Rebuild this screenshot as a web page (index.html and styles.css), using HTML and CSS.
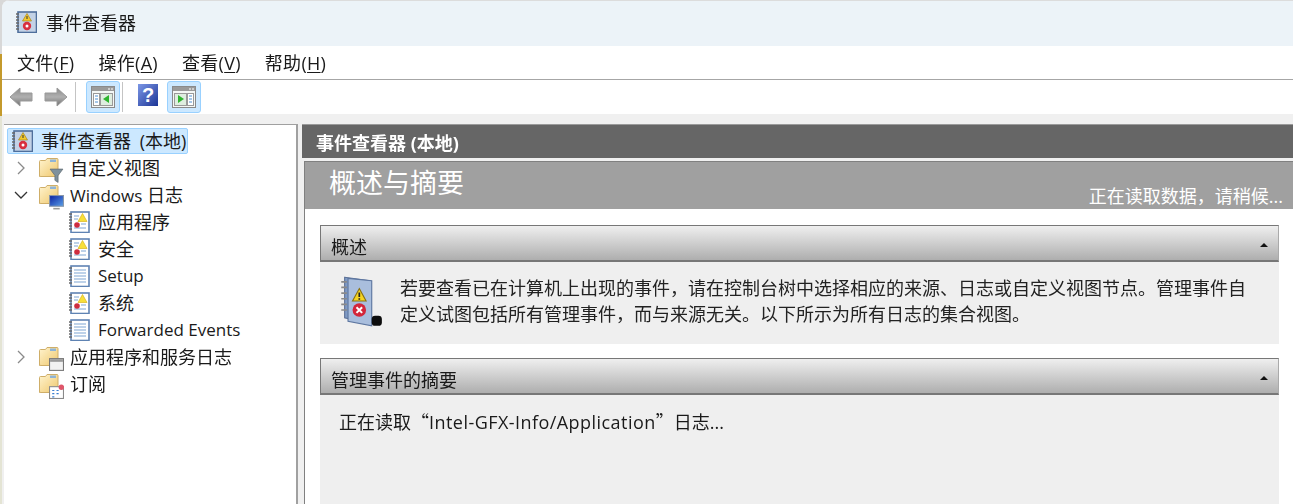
FILE: index.html
```html
<!DOCTYPE html>
<html lang="zh-CN">
<head>
<meta charset="utf-8">
<title>事件查看器</title>
<link rel="stylesheet" href="styles.css">
</head>
<body>
<svg class="defs" width="0" height="0" aria-hidden="true">
  <defs>
    <linearGradient id="fold" x1="0" y1="0" x2="1" y2="1"><stop offset="0" stop-color="#fff4cf"/><stop offset="1" stop-color="#efc76c"/></linearGradient>
    <linearGradient id="arrow" x1="0" y1="0" x2="0" y2="1"><stop offset="0" stop-color="#8a8a8a"/><stop offset=".5" stop-color="#b0b0b0"/><stop offset="1" stop-color="#6e6e6e"/></linearGradient>
    <linearGradient id="help" x1="0" y1="0" x2="1" y2="1"><stop offset="0" stop-color="#7c97e6"/><stop offset="1" stop-color="#1c3596"/></linearGradient>
    <linearGradient id="screen" x1="0" y1="0" x2="1" y2="1"><stop offset="0" stop-color="#0a1fa0"/><stop offset="1" stop-color="#5aa0e8"/></linearGradient>
    <symbol id="folder" viewBox="0 0 22 22">
      <path d="M1.500 19.500v-15q0-1 1-1h5l1.500-2h10q1 0 1 1v16q0 1-1 1h-16q-1.500 0-1.500-1z" fill="url(#fold)" stroke="#cfae68"/>
      <path d="M12 2.500h6v2.500h-6z" fill="#8fb4d6"/>
    </symbol>
    <symbol id="book" viewBox="0 0 22 22">
      <rect x="3" y="1" width="18" height="20.500" fill="#fff" stroke="#5f83b3" stroke-width="1.600"/>
      <path d="M6 5h12M6 8h12M6 11h12M6 14h12M6 17h12" stroke="#a9c4e2" stroke-width="1.300"/>
      <path d="M4 3H1M4 6H1M4 9H1M4 12H1M4 15H1M4 18H1" stroke="#6a6a6a" stroke-width="1.500"/>
    </symbol>
    <symbol id="booklog" viewBox="0 0 22 22">
      <rect x="3" y="1" width="18" height="20.500" fill="#fff" stroke="#5f83b3" stroke-width="1.600"/>
      <path d="M6 5h5M6 8h4M13 13h5M6 17h12" stroke="#a9c4e2" stroke-width="1.300"/>
      <path d="M4 3H1M4 6H1M4 9H1M4 12H1M4 15H1M4 18H1" stroke="#6a6a6a" stroke-width="1.500"/>
      <path d="M14.500 2.500l4.500 8h-9z" fill="#f7df3a" stroke="#d9b41e" stroke-width=".7"/>
      <circle cx="9" cy="14" r="2.800" fill="#cf2d3f"/>
    </symbol>
    <symbol id="bookroot" viewBox="0 0 22 22">
      <rect x="3" y="1" width="18.500" height="20.500" fill="#c3d2e6" stroke="#4f6f9c" stroke-width="1.600"/>
      <path d="M4 3H1M4 6H1M4 9H1M4 12H1M4 15H1M4 18H1" stroke="#6a6a6a" stroke-width="1.500"/>
      <path d="M12 2.500l4.500 7.500h-9z" fill="#f3c92c" stroke="#a9851a" stroke-width=".7"/>
      <path d="M12 5v3" stroke="#333"/>
      <circle cx="12" cy="15" r="4.200" fill="#d8303f"/>
      <circle cx="12" cy="15" r="1.500" fill="#fff"/>
    </symbol>
    <symbol id="pane" viewBox="0 0 24 22">
      <rect x=".5" y=".5" width="23" height="21" fill="#f4f7f5" stroke="#8a8a8a"/>
      <rect x="1" y="1" width="22" height="4" fill="#9a9a9a"/>
      <path d="M17 3h2M20 3h2" stroke="#fff"/>
      <rect x="2.500" y="7.500" width="6" height="12" fill="#fff" stroke="#9a9a9a"/>
      <path d="M4 10h3M4 13h3M4 16h3" stroke="#4d8fd0"/>
      <rect x="9.500" y="7.500" width="12" height="12" fill="#dfeee0" stroke="#9a9a9a"/>
      <path d="M18 9v8l-6-4z" fill="#2fb52f"/>
    </symbol>
    <symbol id="paneright" viewBox="0 0 24 22">
      <rect x=".5" y=".5" width="23" height="21" fill="#f4f7f5" stroke="#8a8a8a"/>
      <rect x="1" y="1" width="22" height="4" fill="#9a9a9a"/>
      <path d="M17 3h2M20 3h2" stroke="#fff"/>
      <rect x="2.500" y="7.500" width="12" height="12" fill="#dfeee0" stroke="#9a9a9a"/>
      <path d="M6 9v8l6-4z" fill="#2fb52f"/>
      <rect x="15.500" y="7.500" width="6" height="12" fill="#fff" stroke="#9a9a9a"/>
      <path d="M17 10h3M17 13h3M17 16h3" stroke="#4d8fd0"/>
    </symbol>
  </defs>
</svg>
<div class="window">
  <header class="titlebar">
    <svg class="ico22"><use href="#bookroot"/></svg>
    <span class="apptitle">事件查看器</span>
  </header>
  <nav class="menubar">
    <span class="menuitem">文件(<u>F</u>)</span>
    <span class="menuitem">操作(<u>A</u>)</span>
    <span class="menuitem">查看(<u>V</u>)</span>
    <span class="menuitem">帮助(<u>H</u>)</span>
  </nav>
  <div class="toolbar">
    <svg class="arrow" viewBox="0 0 24 20"><path d="M1 10l10-9v5h12v8H11v5z" fill="url(#arrow)" stroke="#9a9a9a"/></svg>
    <svg class="arrow second" viewBox="0 0 24 20"><path d="M23 10L13 1v5H1v8h12v5z" fill="url(#arrow)" stroke="#9a9a9a"/></svg>
    <i class="sep first"></i>
    <span class="toolbtn"><svg class="paneico"><use href="#pane"/></svg></span>
    <i class="sep"></i>
    <svg class="helpico" viewBox="0 0 20 22"><rect width="20" height="22" fill="url(#help)"/><text x="10" y="18" class="helpq">?</text></svg>
    <span class="toolbtn next"><svg class="paneico"><use href="#paneright"/></svg></span>
  </div>
  <div class="main">
    <aside class="tree">
      <div class="row root"><svg class="ico22"><use href="#bookroot"/></svg><span class="selected">事件查看器 (本地)</span></div>
      <div class="row l1"><svg class="chev" viewBox="0 0 10 14"><path d="M2 1l6 6-6 6" fill="none" stroke="#8a8a8a" stroke-width="1.300"/></svg><span class="foldwrap"><svg class="ico22"><use href="#folder"/></svg><svg class="badge" viewBox="0 0 14 14"><path d="M1 1h12L8.500 7v6.500l-3-2V7z" fill="#7f919c" stroke="#56636b" stroke-width=".6"/></svg></span><span class="label">自定义视图</span></div>
      <div class="row l1"><svg class="chev" viewBox="0 0 14 10"><path d="M1 2l6 6 6-6" fill="none" stroke="#333" stroke-width="1.300"/></svg><span class="foldwrap"><svg class="ico22"><use href="#folder"/></svg><svg class="badge" viewBox="0 0 14 14"><rect x=".5" y=".5" width="13" height="10" fill="url(#screen)" stroke="#8a97a8"/><path d="M4 12h6v1.500H4z" fill="#999"/></svg></span><span class="label"><span class="latin">Windows</span> 日志</span></div>
      <div class="row l2"><svg class="ico22"><use href="#booklog"/></svg><span class="label">应用程序</span></div>
      <div class="row l2"><svg class="ico22"><use href="#booklog"/></svg><span class="label">安全</span></div>
      <div class="row l2"><svg class="ico22"><use href="#book"/></svg><span class="label latin">Setup</span></div>
      <div class="row l2"><svg class="ico22"><use href="#booklog"/></svg><span class="label">系统</span></div>
      <div class="row l2"><svg class="ico22"><use href="#book"/></svg><span class="label latin">Forwarded Events</span></div>
      <div class="row l1"><svg class="chev" viewBox="0 0 10 14"><path d="M2 1l6 6-6 6" fill="none" stroke="#8a8a8a" stroke-width="1.300"/></svg><span class="foldwrap"><svg class="ico22"><use href="#folder"/></svg><svg class="badge" viewBox="0 0 14 14"><rect x=".5" y="1.500" width="13" height="11" fill="#f2f2f2" stroke="#777"/><rect x="1" y="2" width="12" height="2.500" fill="#999"/></svg></span><span class="label">应用程序和服务日志</span></div>
      <div class="row l1 nochev"><span class="foldwrap"><svg class="ico22"><use href="#folder"/></svg><svg class="badge" viewBox="0 0 14 14"><rect x=".5" y="2.500" width="13" height="11" fill="#fff" stroke="#8a8a8a"/><path d="M3 6h2M7 6h2M3 9h2M7 9h2M3 12h2" stroke="#3b7fd0"/><circle cx="11.500" cy="3" r="2.500" fill="#e0566a"/></svg></span><span class="label">订阅</span></div>
    </aside>
    <section class="content">
      <div class="contenthead">事件查看器 (本地)</div>
      <div class="contentbody">
        <div class="banner">
          <h1 class="bannertitle">概述与摘要</h1>
          <span class="bannerstatus">正在读取数据&#xFF0C;请稍候...</span>
        </div>
        <div class="panels">
          <div class="panel">
            <div class="panelhead"><span>概述</span><i class="caret"></i></div>
            <div class="overview">
              <svg class="bigico" viewBox="1 0 39 46">
                <path d="M6 2l22 3v38L6 38z" fill="#7f9bc6" stroke="#5f7398"/>
                <path d="M9 3l21 2v40L9 41z" fill="#a9bedd" stroke="#5d76a0"/>
                <path d="M3 6h5M3 11h5M3 16h5M3 21h5M3 26h5M3 31h5" stroke="#8a8a8a" stroke-width="1.500"/>
                <path d="M19 12l6 11H13z" fill="#f5d421" stroke="#8a7212"/>
                <path d="M19 15.500v4M19 20.500v1.500" stroke="#222" stroke-width="1.500"/>
                <circle cx="19" cy="31" r="6" fill="#d3263a"/>
                <path d="M16.500 28.500l5 5M21.500 28.500l-5 5" stroke="#fff" stroke-width="1.800"/>
                <rect x="30" y="36" width="9" height="9" rx="3" fill="#0d0d0d"/>
              </svg>
              <p class="overviewtext">若要查看已在计算机上出现的事件&#xFF0C;请在控制台树中选择相应的来源、日志或自定义视图节点。管理事件自定义试图包括所有管理事件&#xFF0C;而与来源无关。以下所示为所有日志的集合视图。</p>
            </div>
          </div>
          <div class="panel grow">
            <div class="panelhead"><span>管理事件的摘要</span><i class="caret"></i></div>
            <div class="summary">正在读取<span class="cjkq">“</span><span class="spaced">Intel-GFX-Info/Application</span><span class="cjkq">”</span>日志...</div>
          </div>
        </div>
      </div>
    </section>
  </div>
</div>
</body>
</html>
```
FILE: styles.css
```css
* { box-sizing: border-box; }
html, body { height: 100%; }
body {
  margin: 0;
  overflow: hidden;
  padding-left: 2px;
  background: linear-gradient(to bottom, #d8d8d8 0, #d8d8d8 54px, #c49a2c 54px, #c49a2c 116px, #e4e4d4 116px, #e4e4d4 100%);
  font-family: "Open Sans", "Noto Sans CJK SC", sans-serif;
  color: #1a1a1a;
}
.defs { position: absolute; }
svg { display: block; flex: none; }
.window {
  height: 100%;
  display: flex;
  flex-direction: column;
  background: #f0f0f0;
  border-top-left-radius: 8px;
  overflow: hidden;
  filter: blur(.3px);
}
.titlebar {
  height: 46px;
  flex: none;
  display: flex;
  align-items: center;
  padding-left: 13px;
  padding-bottom: 3px;
  gap: 9px;
  background: #ecf3f8;
  border-top: 1px solid #dcdcdc;
}
.apptitle { font-size: 18px; }
.ico22 { width: 22px; height: 22px; }
.menubar {
  height: 34px;
  flex: none;
  display: flex;
  align-items: center;
  gap: 24px;
  padding-left: 15px;
  padding-bottom: 2px;
  background: #fff;
  border-bottom: 1px solid #a6a6a6;
  font-size: 18px;
  letter-spacing: .3px;
}
.menuitem u { text-underline-offset: 2px; }
.toolbar {
  height: 34px;
  flex: none;
  display: flex;
  align-items: center;
  padding-left: 7px;
  background: #fff;
}
.arrow { width: 24px; height: 20px; }
.arrow.second { margin-left: 11px; }
.sep { width: 1px; height: 30px; background: #c4c4c4; margin: 0 2px; }
.sep.first { margin: 0 10px 0 7px; }
.toolbtn {
  width: 34px;
  height: 32px;
  display: flex;
  align-items: center;
  justify-content: center;
  background: #cce8ff;
  border: 1px solid #99d1ff;
  border-radius: 3px;
}
.toolbtn.next { margin-left: 9px; }
.paneico { width: 24px; height: 22px; }
.helpico { width: 20px; height: 22px; margin-left: 13px; margin-top: -4px; }
.helpq { font-family: "Liberation Sans", sans-serif; font-size: 20px; font-weight: 700; fill: #fff; text-anchor: middle; }
.main {
  flex: 1;
  min-height: 0;
  display: flex;
  margin-top: 10px;
  padding-left: 2px;
}
.tree {
  width: 294px;
  flex: none;
  background: #fff;
  border-top: 1px solid #a0a0a0;
  border-right: 2px solid #a0a0a0;
  padding-top: 2px;
  font-size: 18px;
}
.row { height: 27px; display: flex; align-items: center; }
.root { padding-left: 7px; }
.selected {
  height: 26px;
  display: flex;
  align-items: center;
  margin-left: -26px;
  padding: 0 1px 2px 33px;
  background: #cce8ff;
  border: 1px solid #99d1ff;
  border-radius: 2px;
  white-space: pre;
  word-spacing: 4px;
}
.root .ico22 { position: relative; z-index: 1; }
.l1 { padding-left: 10px; }
.l1.nochev { padding-left: 34px; }
.l2 { padding-left: 64px; }
.chev { width: 14px; height: 14px; margin-right: 10px; }
.foldwrap { position: relative; width: 22px; height: 22px; }
.badge { position: absolute; right: -4px; bottom: -4px; width: 15px; height: 15px; }
.label { margin-left: 10px; padding-bottom: 2px; white-space: nowrap; }
.label.latin { padding-bottom: 0; }
.latin { font-size: 17px; }
.l2 .label { margin-left: 8px; }
.content {
  flex: 1;
  min-width: 0;
  display: flex;
  flex-direction: column;
  padding-left: 4px;
}
.contenthead {
  height: 34px;
  flex: none;
  display: flex;
  align-items: center;
  padding-left: 14px;
  background: #666;
  color: #fff;
  font-size: 18px;
  font-weight: 700;
  border-top: 1px solid #9a9a9a;
}
.contentbody {
  flex: 1;
  min-height: 0;
  margin-top: 3px;
  margin-left: 2px;
  display: flex;
  flex-direction: column;
  background: #fff;
  border-left: 1px solid #808080;
}
.banner {
  height: 48px;
  flex: none;
  position: relative;
  background: #a0a0a0;
  border-top: 1px solid #808080;
  color: #fff;
}
.bannertitle {
  margin: 0;
  padding-left: 24px;
  font-size: 27px;
  font-weight: 400;
  line-height: 41px;
}
.bannerstatus { position: absolute; right: 10px; bottom: 1px; font-size: 18px; white-space: nowrap; }
.panels {
  flex: 1;
  min-height: 0;
  display: flex;
  flex-direction: column;
  gap: 14px;
  padding: 16px 14px 0 15px;
}
.panel { display: flex; flex-direction: column; }
.panel.grow { flex: 1; }
.panelhead {
  height: 37px;
  flex: none;
  display: flex;
  align-items: flex-end;
  justify-content: space-between;
  padding: 0 10px 1px 10px;
  font-size: 18px;
  background: linear-gradient(to bottom, #efefef, #aeaeae);
  border: 1px solid #777;
  border-bottom-width: 2px;
  border-right-color: #aaa;
}
.caret {
  width: 0; height: 0;
  margin: 0 0 12px;
  border-left: 4px solid transparent;
  border-right: 4px solid transparent;
  border-bottom: 4px solid #111;
}
.overview {
  height: 82px;
  display: flex;
  background: #efefef;
  padding: 13px 28px 0 19px;
  gap: 17px;
}
.bigico { width: 44px; height: 52px; }
.overviewtext { margin: 0; font-size: 18px; line-height: 26px; color: #222; }
.summary { flex: 1; background: #efefef; padding: 13px 0 0 19px; font-size: 18px; }
.cjkq { font-family: "Noto Sans CJK SC", sans-serif; }
.spaced { letter-spacing: .45px; }
```
